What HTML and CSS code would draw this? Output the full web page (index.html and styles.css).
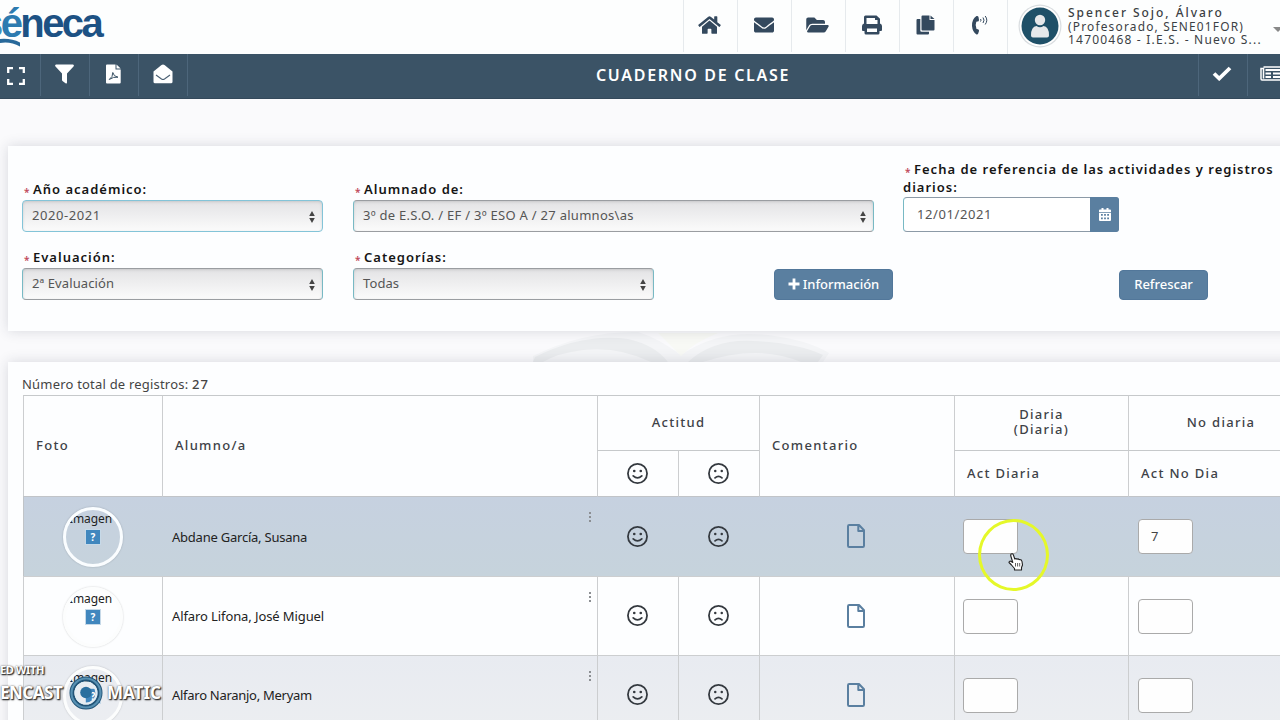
FILE: index.html
```html
<!DOCTYPE html>
<html lang="es">
<head>
<meta charset="utf-8">
<title>Séneca - Cuaderno de clase</title>
<link rel="stylesheet" href="styles.css">
</head>
<body>
<svg class="defs" width="0" height="0">
  <defs>
    <symbol id="smile" viewBox="0 0 20 20"><g fill="none" stroke="currentColor" stroke-width="1.7" stroke-linecap="round"><circle cx="10" cy="10" r="9.1"/><path d="M5.9 12.3Q10 16 14.1 12.3"/></g><circle cx="6.9" cy="7.6" r="1.25" fill="currentColor"/><circle cx="13.1" cy="7.6" r="1.25" fill="currentColor"/></symbol>
    <symbol id="frown" viewBox="0 0 20 20"><g fill="none" stroke="currentColor" stroke-width="1.7" stroke-linecap="round"><circle cx="10" cy="10" r="9.1"/><path d="M6.7 14.2Q10 11.2 13.3 14.2"/></g><circle cx="6.9" cy="7.6" r="1.2" fill="currentColor"/><circle cx="13.1" cy="7.6" r="1.2" fill="currentColor"/></symbol>
    <symbol id="file" viewBox="0 0 18 24"><path d="M1 2.2Q1 1 2.2 1H12L17 6.2V21.800Q17 23 15.800 23H2.200Q1 23 1 21.800ZM11.300 1V7H17" fill="none" stroke="currentColor" stroke-width="2" stroke-linejoin="round"/></symbol>
    <symbol id="arrows" viewBox="0 0 6 12"><path d="M3 0L5.800 5H.2ZM3 12L.2 7H5.800Z" fill="#444"/></symbol>
  </defs>
</svg>
<div class="page">
  <header class="top">
    <div class="logo"><span>s</span><span class="logo-e">é</span><span>neca</span>
      <svg class="swoosh" width="22" height="9" viewBox="0 0 22 9"><path d="M0 1Q11 0 20 4.500V8.500Q10 3 0 5Z" fill="#28699a"/></svg>
    </div>
    <nav class="top-nav">
      <a><svg width="23" height="20" viewBox="0 0 576 512"><path fill="currentColor" d="M280.37 148.26L96 300.11V464a16 16 0 0 0 16 16l112.06-.29a16 16 0 0 0 15.92-16V368a16 16 0 0 1 16-16h64a16 16 0 0 1 16 16v95.64a16 16 0 0 0 16 16.05L464 480a16 16 0 0 0 16-16V300L295.67 148.26a12.19 12.19 0 0 0-15.3 0zM571.6 251.47L488 182.56V44.05a12 12 0 0 0-12-12h-56a12 12 0 0 0-12 12v72.61L318.47 43a48 48 0 0 0-61 0L4.34 251.47a12 12 0 0 0-1.6 16.9l25.5 31A12 12 0 0 0 45.15 301l235.22-193.74a12.19 12.19 0 0 1 15.3 0L530.9 301a12 12 0 0 0 16.9-1.6l25.5-31a12 12 0 0 0-1.7-16.93z"/></svg></a>
      <a><svg width="20" height="20" viewBox="0 0 512 512"><path fill="currentColor" d="M502.3 190.8c3.9-3.1 9.7-.2 9.7 4.7V400c0 26.5-21.5 48-48 48H48c-26.5 0-48-21.5-48-48V195.6c0-5 5.7-7.8 9.7-4.7 22.4 17.4 52.1 39.5 154.1 113.6 21.1 15.4 56.7 47.8 92.2 47.6 35.7.3 72-32.8 92.3-47.6 102-74.1 131.6-96.3 154-113.7zM256 320c23.2.4 56.6-29.2 73.4-41.4 132.7-96.3 142.8-104.7 173.4-128.7 5.8-4.5 9.2-11.5 9.2-18.9v-19c0-26.5-21.5-48-48-48H48c-26.5 0-48 21.5-48 48v19c0 7.4 3.4 14.3 9.2 18.9 30.6 23.9 40.7 32.4 173.4 128.7 16.8 12.2 50.2 41.8 73.4 41.4z"/></svg></a>
      <a><svg width="23" height="20" viewBox="0 0 576 512"><path fill="currentColor" d="M572.694 292.093L500.27 416.248A63.997 63.997 0 0 1 444.989 448H45.025c-18.523 0-30.064-20.093-20.731-36.093l72.424-124.155A64 64 0 0 1 152 256h399.964c18.523 0 30.064 20.093 20.73 36.093zM152 224h328v-48c0-26.51-21.49-48-48-48H272l-64-64H48C21.49 64 0 85.49 0 112v278.046l69.077-118.418C86.214 242.25 117.989 224 152 224z"/></svg></a>
      <a><svg width="20" height="20" viewBox="0 0 20 20"><path fill="currentColor" fill-rule="evenodd" d="M2 2Q2 .5 3.500 .5H14.500L18 3.800V8.500Q20 9 20 11V15Q20 16 19 16H17.500V18Q17.500 19.500 16 19.500H4Q2.500 19.500 2.500 18V16H1Q0 16 0 15V11Q0 9 2 8.500ZM4.500 3V9H15.500V5H13V3ZM5 13.500V17H15V13.500Z"/></svg></a>
      <a><svg width="19" height="20" viewBox="0 0 19 20"><path fill="currentColor" d="M6.500 .5H13.500V5H18.500V14.500Q18.500 15.500 17.500 15.500H6.500Q5.500 15.500 5.500 14.500V1.500Q5.500 .5 6.500 .5ZM14.500 .5L18.500 4H14.500ZM.5 5Q.5 4 1.500 4H4.300V15.500Q4.300 16.700 5.500 16.700H13V18.500Q13 19.500 12 19.500H1.500Q.5 19.500 .5 18.500Z"/></svg></a>
      <a><svg width="18" height="20" viewBox="0 0 18 20"><path fill="currentColor" d="M5.500 1Q7 .5 7.500 2L8 5Q8 6.500 6.500 6.600L5.300 6.800Q3.800 10.500 5.500 14L7 14.200Q8.300 14.600 8 16L7.200 18.500Q6.800 19.800 5.500 19.500Q1.500 17 1 11Q.8 4 5.500 1Z"/><path d="M9.500 4Q10.500 5.200 9.500 6.500M12 2.500Q14 5.200 12 8M14.200 1Q17.400 5.200 14.200 9.500" fill="none" stroke="currentColor" stroke-width="1"/></svg></a>
    </nav>
    <div class="user">
      <svg class="avatar" width="44" height="44" viewBox="0 0 44 44"><circle cx="22" cy="22" r="21.500" fill="#d9dde0"/><circle cx="22" cy="22" r="20.300" fill="#fff"/><circle cx="22" cy="22" r="18.500" fill="#1f5068"/><circle cx="22" cy="16" r="5.200" fill="#e6e8ea"/><path d="M13 31.500Q13 22.500 18.500 22Q22 24.500 25.500 22Q31 22.500 31 31.500Q31 33.500 29 33.500H15Q13 33.500 13 31.500Z" fill="#e6e8ea"/></svg>
      <div class="user-text"><div class="user-name">Spencer Sojo, Álvaro</div><div class="user-role">(Profesorado, SENE01FOR)</div><div class="user-center">14700468 - I.E.S. - Nuevo S...</div></div>
      <svg class="caret" width="10" height="5" viewBox="0 0 10 5"><path d="M0 0H10L5 5Z" fill="#888"/></svg>
    </div>
  </header>

  <div class="bar">
    <div class="tool tool-first"><svg width="18" height="18" viewBox="0 0 18 18"><path d="M1.200 6V1.200H6M12 1.200H16.800V6M16.800 12V16.800H12M6 16.800H1.200V12" fill="none" stroke="#fff" stroke-width="2.300"/></svg></div>
    <div class="tool"><svg width="19" height="20" viewBox="0 0 19 20"><path d="M1 .5H18Q19.500 1 18.500 2.500L12 9.500V18.500Q12 20 10.500 19.200L7.500 17Q7 16.500 7 16V9.500L.5 2.500Q-.5 1 1 .5Z" fill="#fff"/></svg></div>
    <div class="tool"><svg width="15" height="20" viewBox="0 0 15 20"><path d="M1 .5H9.500V5.500H14.700V18.500Q14.700 19.500 13.700 19.500H1Q0 19.500 0 18.500V1.500Q0 .5 1 .5ZM10.500 .5L14.700 4.500H10.500Z" fill="#fff"/><path d="M3.200 15.500Q7 13 6.800 8.500Q7.500 12.500 12 13.200Q7.500 12.500 3.200 15.500Z" fill="none" stroke="#3b5366" stroke-width="1"/></svg></div>
    <div class="tool"><svg width="20" height="20" viewBox="0 0 20 20"><path d="M.5 7.500L8.500 1Q10 0 11.500 1L19.500 7.500V17.800Q19.500 19.300 18 19.300H2Q.5 19.300 .5 17.800Z" fill="#fff"/><path d="M3 11L8.500 15Q10 16 11.500 15L17 11" fill="none" stroke="#4a6074" stroke-width="1.100"/></svg></div>
    <h1 class="bar-title">CUADERNO DE CLASE</h1>
    <div class="tool tool-check"><svg width="20" height="15" viewBox="0 0 20 15"><path d="M2 7.500L7.200 12.500L18 2" fill="none" stroke="#fff" stroke-width="3.800"/></svg></div>
    <div class="tool tool-news"><svg width="22" height="15" viewBox="0 0 22 15"><path d="M3.500 1H21V14H2Q1 14 1 12.500V2.500H3.500V12.500" fill="none" stroke="#fff" stroke-width="1.500"/><path d="M5.500 4H20M5.500 7.500H11M13 7.500H20M5.500 11H11M13 11H20" stroke="#fff" stroke-width="1.800"/></svg></div>
  </div>

  <main class="main">
    <section class="card filters">
      <div class="field f-year"><label><i>*</i>Año académico:</label><div class="select focus"><span class="t-year">2020-2021</span><svg width="6" height="12"><use href="#arrows"/></svg></div></div>
      <div class="field f-group"><label><i>*</i>Alumnado de:</label><div class="select"><span class="t-group">3º de E.S.O. / EF / 3º ESO A / 27 alumnos\as</span><svg width="6" height="12"><use href="#arrows"/></svg></div></div>
      <div class="field f-date"><label class="l-date"><i>*</i>Fecha de referencia de las actividades y registros<br>diarios:</label>
        <div class="date"><span>12/01/2021</span><b><svg width="12" height="13" viewBox="0 0 12 13"><path fill="#fff" fill-rule="evenodd" d="M0 2.500Q0 1.500 1 1.500H2.500V0H4.500V1.500H7.500V0H9.500V1.500H11Q12 1.500 12 2.500V4H0ZM0 4.700H12V12Q12 13 11 13H1Q0 13 0 12ZM2 6V7.800H3.800V6ZM5.100 6V7.800H6.900V6ZM8.200 6V7.800H10V6ZM2 9.500V11.300H3.800V9.500ZM5.100 9.500V11.300H6.900V9.500ZM8.200 9.500V11.300H10V9.500Z"/></svg></b></div></div>
      <div class="field f-eval"><label><i>*</i>Evaluación:</label><div class="select"><span>2ª Evaluación</span><svg width="6" height="12"><use href="#arrows"/></svg></div></div>
      <div class="field f-cat"><label><i>*</i>Categorías:</label><div class="select"><span>Todas</span><svg width="6" height="12"><use href="#arrows"/></svg></div></div>
      <div class="btn btn-info"><svg width="12" height="12" viewBox="0 0 12 12"><path d="M6 .5V11.500M.5 6H11.500" stroke="#fff" stroke-width="2.800"/></svg><span>Información</span></div>
      <div class="btn btn-refresh"><span>Refrescar</span></div>
    </section>

    <div class="gap"><svg width="300" height="31" viewBox="0 0 300 31"><path d="M0 25Q50 0 105 1Q125 7 148 24Q185 -2 235 4Q275 9 296 22L290 31H0Z" fill="#f4f5f7"/><path d="M2 26Q50 2 95 8Q122 14 135 31H118Q85 15 50 19Q25 22 10 31H0ZM155 31Q180 8 220 10Q265 12 290 24L285 31H268Q225 13 170 31Z" fill="#ebedef"/><path d="M125 2H185Q160 12 148 25Z" fill="#f8f9f5"/></svg></div>

    <section class="card list">
      <p class="count">Número total de registros: <b>27</b></p>
      <div class="grid">
        <div class="h tall"><span>Foto</span></div>
        <div class="h tall"><span class="h-al">Alumno/a</span></div>
        <div class="h span2 center"><span>Actitud</span></div>
        <div class="h tall"><span>Comentario</span></div>
        <div class="h center two"><span>Diaria<br>(Diaria)</span></div>
        <div class="h center"><span>No diaria</span></div>
        <div class="h sub center r2 c3"><svg class="face"><use href="#smile"/></svg></div>
        <div class="h sub center r2 c4"><svg class="face"><use href="#frown"/></svg></div>
        <div class="h sub r2 c6"><span>Act Diaria</span></div>
        <div class="h sub r2 c7"><span>Act No Dia</span></div>

        <div class="row selected">
          <div class="c"><div class="photo"><em>Imagen</em><u>?</u></div></div>
          <div class="c name"><span class="n1">Abdane García, Susana</span><s></s></div>
          <div class="c center"><svg class="face"><use href="#smile"/></svg></div>
          <div class="c center"><svg class="face"><use href="#frown"/></svg></div>
          <div class="c center"><svg class="doc"><use href="#file"/></svg></div>
          <div class="c"><div class="mark"></div></div>
          <div class="c"><div class="mark">7</div></div>
        </div>
        <div class="row">
          <div class="c"><div class="photo"><em>Imagen</em><u>?</u></div></div>
          <div class="c name"><span class="n2">Alfaro Lifona, José Miguel</span><s></s></div>
          <div class="c center"><svg class="face"><use href="#smile"/></svg></div>
          <div class="c center"><svg class="face"><use href="#frown"/></svg></div>
          <div class="c center"><svg class="doc"><use href="#file"/></svg></div>
          <div class="c"><div class="mark"></div></div>
          <div class="c"><div class="mark"></div></div>
        </div>
        <div class="row alt">
          <div class="c"><div class="photo"><em>Imagen</em><u>?</u></div></div>
          <div class="c name"><span class="n3">Alfaro Naranjo, Meryam</span><s></s></div>
          <div class="c center"><svg class="face"><use href="#smile"/></svg></div>
          <div class="c center"><svg class="face"><use href="#frown"/></svg></div>
          <div class="c center"><svg class="doc"><use href="#file"/></svg></div>
          <div class="c"><div class="mark"></div></div>
          <div class="c"><div class="mark"></div></div>
        </div>
      </div>
    </section>
  </main>

  <div class="halo"></div>
  <svg class="hand" width="16" height="18" viewBox="0 0 16 18"><path d="M3.200 1Q4.600 .2 5.300 1.800L6.800 6Q8 5.200 9 6.200Q10.200 5.500 11.200 6.600Q13.500 6.200 14 8.500L14.500 12L13.500 14.500V17H6.500V15.500L3.500 12L1 9.500Q1 7.800 2.800 8.200L4.800 9.500L2.800 3Q2.500 1.500 3.200 1Z" fill="#fff" stroke="#222" stroke-width="1.100" stroke-linejoin="round"/><path d="M7.500 10V13.500M9.600 10V13.500M11.700 10V13.500" stroke="#333" stroke-width=".8"/></svg>
  <div class="stamp stamp-top">ED WITH</div>
  <div class="stamp stamp-left">ENCAST</div>
  <svg class="stamp-o" width="36" height="36" viewBox="0 0 36 36"><circle cx="18" cy="18" r="14" fill="none" stroke="#225477" stroke-width="5"/><circle cx="18" cy="18" r="14.500" fill="none" stroke="#5790b2" stroke-width="2.200"/><circle cx="18" cy="18" r="10.500" fill="none" stroke="#e4edf3" stroke-width="2.200"/><circle cx="18" cy="17.500" r="5.800" fill="#2a6f9e"/></svg>
  <div class="stamp stamp-right">MATIC</div>
</div>
</body>
</html>
```
FILE: styles.css
```css
* { box-sizing: border-box; }
body { margin: 0; font-family: "Noto Sans", "Open Sans", sans-serif; font-size: 13px; color: #333; }
.defs { position: absolute; }
.page { position: relative; width: 1280px; height: 720px; overflow: hidden; background: #fafafc; display: flex; flex-direction: column; }
svg { display: block; flex: none; }

.top { height: 54px; flex: none; background: #fdfefe; display: flex; }
.logo { position: relative; width: 683px; flex: none; display: flex; font: bold 40px/46px "Liberation Sans", sans-serif; letter-spacing: -2.6px; color: #1d5284; }
.logo span:first-child { margin-left: -19px; color: #3e8fbd; }
.logo .logo-e { color: #2d7bb0; }
.swoosh { position: absolute; left: 0; top: 38px; }
.top-nav { display: flex; flex: none; }
.top-nav a { width: 54px; height: 52px; border-left: 1px solid #e6eaed; display: flex; align-items: center; justify-content: center; color: #34495e; padding: 0 2px 3px 0; }
.user { flex: none; display: flex; width: 273px; border-left: 1px solid #e6eaed; padding-left: 10px; align-items: flex-start; }
.avatar { margin-top: 4px; }
.user-text { margin: 6px 0 0 6px; width: 200px; flex: none; font-size: 12px; line-height: 13.7px; color: #3b3f44; white-space: nowrap; }
.user-name { font-weight: 500; letter-spacing: 1.95px; }
.user-role { letter-spacing: 1.2px; font-size: 11.9px; }
.user-center { letter-spacing: 1.2px; }
.caret { margin: 27px 0 0 5px; }

.bar { height: 45px; flex: none; display: flex; background: #3b5366; border-bottom: 1px solid #34495b; }
.tool { width: 49px; height: 42px; flex: none; border-right: 1px solid #4d667b; display: flex; align-items: center; justify-content: center; padding: 0 1px 3px 0; }
.tool-first { width: 41px; padding: 2px 9px 0 0; }
.bar-title { flex: none; width: 1010px; margin: 0; font-size: 16px; line-height: 42px; font-weight: 600; letter-spacing: 1.7px; color: #fff; text-align: center; }
.tool-check { border-left: 1px solid #4d667b; width: 50px; padding-right: 2px; }
.tool-news { padding-left: 12px; justify-content: flex-start; border: 0; }

.main { flex: 1; display: flex; flex-direction: column; padding: 47px 0 0 7.5px; }
.card { background: #fdfeff; box-shadow: 0 0 12px rgba(40,45,70,.17); width: 1290px; flex: none; position: relative; }
.filters { height: 185px; padding: 14px 0 0 14.5px; display: grid; grid-template-columns: 331px 550px 375px; grid-template-rows: 72px 68px; grid-template-areas: "a b c" "d e e"; }
.field { display: flex; flex-direction: column; justify-content: flex-end; }
.f-year { width: 301px; }
.f-group { width: 521px; }
.f-date { width: 375px; }
.f-eval { width: 301px; grid-area: 2 / 1; }
.f-cat { width: 301px; grid-area: 2 / 2; }
label { font-weight: 600; font-size: 13px; line-height: 18px; letter-spacing: 1px; color: #151515; white-space: nowrap; margin-bottom: 2px; }
label i { display: inline-block; width: 11px; padding-left: 2px; color: #c0485a; font-style: normal; font-size: 10px; letter-spacing: 0; line-height: 10px; vertical-align: -2px; }
.l-date { margin-bottom: 1px; }
.select { height: 32px; border: 1px solid #9a9da1; border-left-color: #78b9c4; border-right-color: #78b9c4; border-radius: 4px; background: linear-gradient(#e3e3e5, #fbfbfb); display: flex; align-items: center; justify-content: space-between; padding: 0 7px 2px 9px; color: #555; box-shadow: inset 0 1px 3px rgba(0,0,0,.13); letter-spacing: .1px; }
.t-group { letter-spacing: .28px; }
.t-year { letter-spacing: .55px; }
.select svg { margin-top: 3px; }
.select.focus { border-color: #83c4d8; }
.date { width: 216px; height: 35px; border: 1px solid #8c9aa7; border-left-color: #78b9c4; border-radius: 4px; background: #fff; display: flex; justify-content: space-between; color: #555; line-height: 32px; padding-left: 13px; letter-spacing: .6px; margin-top: 0; }
.date b { width: 29px; background: #5a7fa0; display: flex; align-items: center; justify-content: center; border-radius: 0 3px 3px 0; margin: -1px; height: 35px; }
.btn { height: 31px; background: #5a7fa0; border-radius: 4px; color: #fff; font-weight: 500; font-size: 13px; display: flex; align-items: center; justify-content: center; align-self: end; gap: 3px; padding-bottom: 2px; border: 1px solid #52779a; }
.btn-info { grid-area: 2 / 2; width: 119px; margin-left: 421px; }
.btn-refresh { grid-area: 2 / 3; width: 89px; margin-left: 216px; height: 30px; }

.gap { height: 31px; flex: none; padding-left: 525px; }

.list { height: 400px; padding: 13px 0 0 14.5px; }
.count { margin: 0; line-height: 19px; height: 20px; font-size: 13px; letter-spacing: .2px; color: #444; }
.count b { font-weight: 500; letter-spacing: 1.2px; }
.grid { display: grid; margin-left: 1px; width: 1290px; grid-template-columns: 139px 435px 81px 81px 195px 174px 185px; grid-template-rows: 55px 46px 80px 79px 79px; }
.h { border-left: 1px solid #ccced0; border-top: 1px solid #c6c9cb; display: flex; align-items: center; padding: 0 12px 2px; font-weight: 500; letter-spacing: 1.3px; color: #3d4247; font-size: 13px; line-height: 15px; white-space: nowrap; }
.h.tall { grid-row: 1 / 3; }
.span2 { grid-column: 3 / 5; }
.center { justify-content: center; text-align: center; }
.r2 { grid-row: 2; }
.h.sub { padding-bottom: 0; }
.c3 { grid-column: 3; }
.c4 { grid-column: 4; }
.c6 { grid-column: 6; }
.c7 { grid-column: 7; }
.face { width: 21px; height: 21px; color: #34393f; margin-right: 2px; }
.doc { width: 18px; height: 24px; color: #5a7fa0; margin-right: 2px; }
.row { grid-column: 1 / 8; display: grid; grid-template-columns: subgrid; }
.c { border-left: 1px solid #ccced0; border-top: 1px solid #ccced0; display: flex; align-items: center; padding-left: 8px; position: relative; }
.c.center { padding: 0 0 1px; }
.selected { background: linear-gradient(#c6d1e0, #c6d3dc); }
.selected .c { border-left-color: transparent; border-top-color: #c1c4c8; }
.selected .c:first-child { border-left-color: #c0c4c8; }
.alt { background: linear-gradient(#e8ebf1, #eceef1); }
.name { color: #222; font-size: 13px; white-space: nowrap; padding-left: 9px; }
.n1 { letter-spacing: -.23px; }
.n2 { letter-spacing: -.1px; }
.n3 { letter-spacing: -.28px; }
.name s { position: absolute; right: 6px; top: 15px; width: 2px; height: 10px; background: repeating-linear-gradient(#8c8f93 0 2px, transparent 2px 4px); }
.photo { position: relative; width: 60px; height: 60px; margin: 1px 0 0 31px; border: 3px solid #fcfdfd; border-radius: 50%; overflow: hidden; box-shadow: 0 0 2px rgba(0,0,0,.22); }
.row.selected .photo { border-color: #fafdff; }
.photo em { position: absolute; right: 8px; top: 1px; font-style: normal; font-size: 12px; line-height: 16px; letter-spacing: -.1px; color: #222; }
.photo u { position: absolute; left: 19px; top: 19px; width: 16px; height: 16px; border: 1px solid #c6d9e8; background: #4187be; color: #fff; font-size: 10px; line-height: 14px; text-align: center; font-weight: 700; text-decoration: none; }
.mark { width: 55px; height: 35px; border: 1px solid #aaa; border-radius: 4px; background: #fefefe; padding-left: 12px; line-height: 32px; color: #444; font-size: 13px; }
.c:last-child .mark { margin-left: 1px; }

.halo { position: absolute; left: 978px; top: 519px; width: 71px; height: 72px; border: 3px solid #e5f829; border-radius: 50%; }
.hand { position: absolute; left: 1008px; top: 553px; }
.stamp { position: absolute; color: #fff; font-weight: 700; text-shadow: 1px 1px 1px #333, 0 0 2px #555, 1px 1px 2px #666; white-space: nowrap; }
.stamp-top { left: 0; top: 662px; font-size: 11px; line-height: 16px; letter-spacing: -.4px; }
.stamp-left { left: 0; top: 682px; font-size: 17px; line-height: 22px; letter-spacing: -.5px; }
.stamp-right { left: 107px; top: 682px; font-size: 17px; line-height: 22px; }
.stamp-o { position: absolute; left: 68px; top: 675px; }
```
